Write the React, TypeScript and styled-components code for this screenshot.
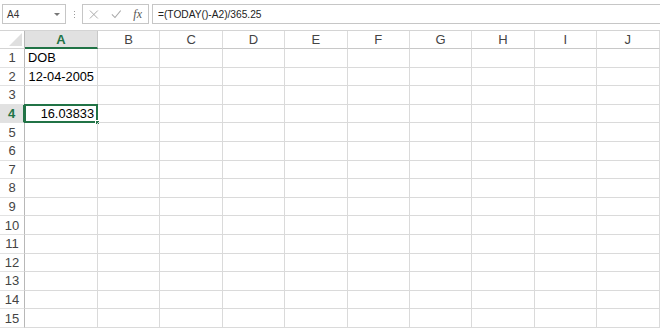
import { Fragment } from 'react';
import styled, { createGlobalStyle, css } from 'styled-components';

const GlobalStyle = createGlobalStyle`
  html, body {
    margin: 0;
    padding: 0;
    background: #ffffff;
  }
  body {
    font-family: "Liberation Sans", Arial, sans-serif;
    width: 660px;
    height: 328px;
    overflow: hidden;
  }
`;

const GREEN = '#217346';
const GRID = '#dadada';

const FormulaBar = styled.div`
  display: flex;
  align-items: center;
  height: 20px;
  padding: 4px 0 0 2px;
`;

const NameBox = styled.div`
  box-sizing: border-box;
  width: 64px;
  height: 20px;
  border: 1px solid #c6c6c6;
  display: flex;
  align-items: center;
  justify-content: space-between;
  padding: 0 5px 0 4px;
  font-size: 10px;
  color: #333;
`;

const DropArrow = styled.span`
  width: 0;
  height: 0;
  border-left: 3px solid transparent;
  border-right: 3px solid transparent;
  border-top: 3px solid #777;
`;

const Dots = styled.div`
  width: 16px;
  display: flex;
  flex-direction: column;
  align-items: center;
  gap: 2px;

  span {
    width: 1px;
    height: 1px;
    background: #9a9a9a;
  }
`;

const IconBox = styled.div`
  box-sizing: border-box;
  width: 67px;
  height: 20px;
  border: 1px solid #c6c6c6;
  display: flex;
  align-items: center;
  padding: 0 6px;
  gap: 12px;
`;

const Fx = styled.span`
  font-family: "Liberation Serif", "Times New Roman", serif;
  font-style: italic;
  font-size: 12px;
  color: #555;
`;

const FormulaInput = styled.div`
  box-sizing: border-box;
  flex: 1;
  height: 20px;
  margin-left: 3px;
  border: 1px solid #c6c6c6;
  border-right: none;
  display: flex;
  align-items: center;
  padding-left: 5px;
  font-size: 10.2px;
  color: #222;
`;

const Sheet = styled.div`
  margin-top: 6px;
  display: grid;
  grid-template-columns: 25px 73px repeat(9, 62.4px);
  grid-template-rows: 18px repeat(15, 18.6px);
  border-top: 1px solid #d4d4d4;
`;

const Corner = styled.div`
  position: relative;
  box-sizing: border-box;
  border-right: 1px solid #b8b8b8;
  border-bottom: 1px solid #d4d4d4;

  &::after {
    content: '';
    position: absolute;
    right: 2px;
    bottom: 2px;
    width: 0;
    height: 0;
    border-left: 13px solid transparent;
    border-bottom: 13px solid #dfdfdf;
  }
`;

const ColHeader = styled.div<{ $active?: boolean }>`
  box-sizing: border-box;
  display: flex;
  align-items: center;
  justify-content: center;
  font-size: 13px;
  color: #444;
  border-right: 1px solid #dcdcdc;
  border-bottom: 1px solid #c8c8c8;
  ${({ $active }) =>
    $active &&
    css`
      background: #e1e1e1;
      color: ${GREEN};
      font-weight: bold;
      border-bottom: 2px solid ${GREEN};
      border-right-color: #c8c8c8;
    `}
`;

const RowHeader = styled.div<{ $active?: boolean }>`
  box-sizing: border-box;
  display: flex;
  align-items: center;
  justify-content: center;
  font-size: 13px;
  color: #444;
  border-right: 1px solid #b8b8b8;
  border-bottom: 1px solid #e2e2e2;
  ${({ $active }) =>
    $active &&
    css`
      background: #e1e1e1;
      color: ${GREEN};
      font-weight: bold;
      border-right: 2px solid ${GREEN};
    `}
`;

const Cell = styled.div<{ $align?: 'left' | 'right'; $selected?: boolean }>`
  position: relative;
  box-sizing: border-box;
  display: flex;
  align-items: center;
  justify-content: ${({ $align }) => ($align === 'right' ? 'flex-end' : 'flex-start')};
  padding: 0 3px;
  font-size: 12.8px;
  color: #000;
  white-space: nowrap;
  border-right: 1px solid ${GRID};
  border-bottom: 1px solid ${GRID};
  ${({ $selected }) =>
    $selected &&
    css`
      &::before {
        content: '';
        position: absolute;
        left: -1px;
        top: -1px;
        right: -1px;
        bottom: -1px;
        border: 2px solid ${GREEN};
        pointer-events: none;
      }
      &::after {
        content: '';
        position: absolute;
        right: -3px;
        bottom: -3px;
        width: 5px;
        height: 5px;
        background: ${GREEN};
        border: 1px solid #fff;
        box-sizing: border-box;
      }
    `}
`;

const columns = ['A', 'B', 'C', 'D', 'E', 'F', 'G', 'H', 'I', 'J'];

const data: Record<string, { value: string; align: 'left' | 'right' }> = {
  A1: { value: 'DOB', align: 'left' },
  A2: { value: '12-04-2005', align: 'right' },
  A4: { value: '16.03833', align: 'right' },
};

const selected = { col: 'A', row: 4 };

const CrossIcon = () => (
  <svg width="11" height="11" viewBox="0 0 11 11">
    <path d="M1 1 L10 10 M10 1 L1 10" stroke="#a8a8a8" strokeWidth="1.1" fill="none" />
  </svg>
);

const CheckIcon = () => (
  <svg width="12" height="10" viewBox="0 0 12 10">
    <path d="M1 5.5 L4.5 9 L11 1" stroke="#a8a8a8" strokeWidth="1.2" fill="none" />
  </svg>
);

export default function App() {
  const rows = Array.from({ length: 15 }, (_, i) => i + 1);

  return (
    <>
      <GlobalStyle />
      <FormulaBar>
        <NameBox>
          <span>A4</span>
          <DropArrow />
        </NameBox>
        <Dots>
          <span />
          <span />
          <span />
        </Dots>
        <IconBox>
          <CrossIcon />
          <CheckIcon />
          <Fx>fx</Fx>
        </IconBox>
        <FormulaInput>=(TODAY()-A2)/365.25</FormulaInput>
      </FormulaBar>
      <Sheet>
        <Corner />
        {columns.map(c => (
          <ColHeader key={c} $active={c === selected.col}>{c}</ColHeader>
        ))}
        {rows.map(r => (
          <Fragment key={r}>
            <RowHeader $active={r === selected.row}>{r}</RowHeader>
            {columns.map(c => {
              const d = data[`${c}${r}`];
              return (
                <Cell
                  key={`${c}${r}`}
                  $align={d?.align}
                  $selected={c === selected.col && r === selected.row}
                >
                  {d?.value}
                </Cell>
              );
            })}
          </Fragment>
        ))}
      </Sheet>
    </>
  );
}
